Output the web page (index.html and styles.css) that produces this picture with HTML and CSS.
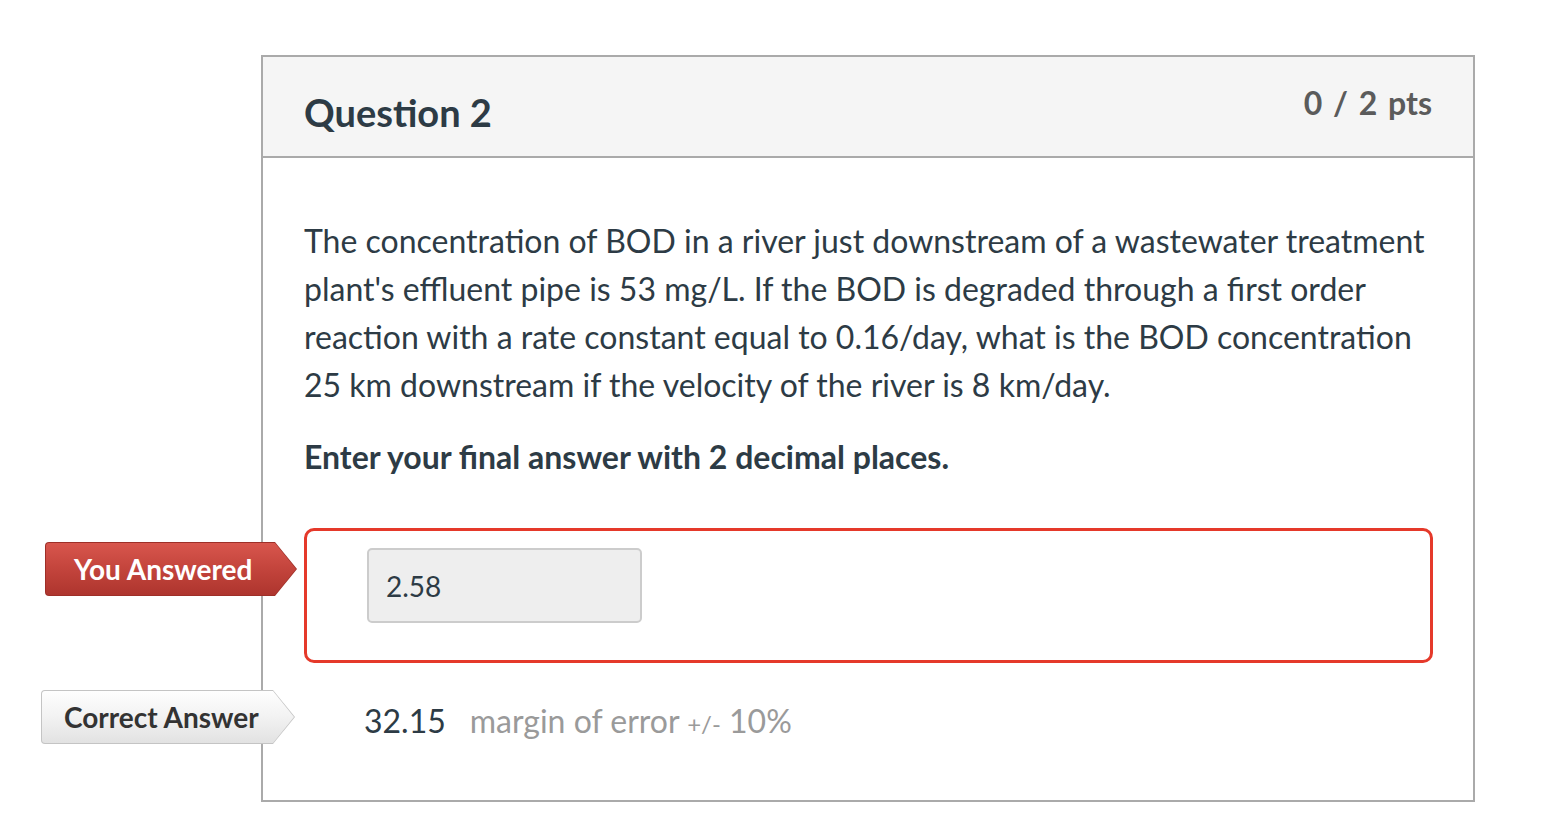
FILE: index.html
```html
<!DOCTYPE html>
<html lang="en">
<head>
<meta charset="utf-8">
<title>Question 2</title>
<link rel="stylesheet" href="styles.css">
</head>
<body>
<div class="page">
  <div class="card">
    <div class="card-header">
      <h2 class="question-name">Question 2</h2>
      <div class="points">0 / 2 pts</div>
    </div>
    <div class="card-body">
      <p class="question-text">The concentration of BOD in a river just downstream of a wastewater treatment plant's effluent pipe is 53 mg/L. If the BOD is degraded through a first order reaction with a rate constant equal to 0.16/day, what is the BOD concentration 25 km downstream if the velocity of the river is 8 km/day.</p>
      <p class="question-note">Enter your final answer with 2 decimal places.</p>

      <div class="answer-row">
        <div class="badge badge-wrong"><span class="badge-inner">You Answered</span></div>
        <div class="answer-box">
          <div class="answer-input">2.58</div>
        </div>
      </div>

      <div class="correct-row">
        <div class="badge badge-correct"><span class="badge-inner">Correct Answer</span></div>
        <span class="answer-number">32.15</span>
        <span class="margin">margin of error <span class="pm">+/-</span> 10%</span>
      </div>
    </div>
  </div>
</div>
</body>
</html>
```

FILE: styles.css
```css
* {
  box-sizing: border-box;
}

body {
  margin: 0;
  background: #ffffff;
  font-family: Lato, "Open Sans", "Liberation Sans", sans-serif;
  color: #2d3b45;
}

.page {
  padding: 55px 0 0 261px;
}

.card {
  width: 1214px;
  border: 2px solid #aaaaaa;
  background: #ffffff;
}

.card-header {
  display: flex;
  justify-content: space-between;
  align-items: flex-start;
  height: 101px;
  padding: 0 41px;
  background: #f5f5f5;
  border-bottom: 2px solid #aaaaaa;
}

.question-name {
  margin: 32px 0 0;
  font-size: 38px;
  line-height: 46px;
  font-weight: 700;
  color: #2d3b45;
}

.points {
  margin-top: 26px;
  font-size: 32px;
  line-height: 40px;
  font-weight: 700;
  word-spacing: 3px;
  color: #5b5b5b;
}

.card-body {
  padding: 59px 41px 48px 41px;
}

.question-text,
.question-note {
  margin: 0;
  font-size: 32px;
  line-height: 48px;
}

.question-note {
  margin-top: 24px;
  font-weight: 700;
}

.answer-row {
  position: relative;
  margin-top: 47px;
}

.answer-box {
  width: 1129px;
  height: 135px;
  border: 3px solid #e5392a;
  border-radius: 10px;
  padding: 17px 0 0 60px;
}

.answer-input {
  width: 275px;
  height: 75px;
  background: #eeeeee;
  border: 2px solid #cccccc;
  border-radius: 5px;
  padding-left: 17px;
  font-size: 28px;
  line-height: 73px;
  color: #2d3b45;
}

.correct-row {
  position: relative;
  display: flex;
  align-items: center;
  height: 60px;
  margin-top: 27px;
  padding-left: 60px;
  font-size: 32px;
}

.answer-number {
  color: #2d3b45;
}

.margin {
  margin-left: 24px;
  color: #9a9a9a;
}

.pm {
  font-size: 24px;
}

/* Arrow badges overlapping the card edge */
.badge {
  position: absolute;
  height: 54px;
  padding: 1px;
  border-radius: 4px 0 0 4px;
  clip-path: polygon(0 0, calc(100% - 22px) 0, 100% 50%, calc(100% - 22px) 100%, 0 100%);
}

.badge-inner {
  display: block;
  height: 100%;
  border-radius: 3px 0 0 3px;
  font-size: 28px;
  font-weight: 700;
  line-height: 52px;
  white-space: nowrap;
  clip-path: polygon(0 0, calc(100% - 21px) 0, 100% 50%, calc(100% - 21px) 100%, 0 100%);
}

.badge-wrong {
  top: 14px;
  left: -259px;
  width: 252px;
  background: #9e2f28;
}

.badge-wrong .badge-inner {
  padding-left: 28px;
  color: #ffffff;
  background: linear-gradient(to bottom, #d8564d 0%, #c3443c 50%, #ae352e 100%);
}

.badge-correct {
  top: 0;
  left: -263px;
  width: 254px;
  background: #c4c4c4;
}

.badge-correct .badge-inner {
  padding-left: 22px;
  color: #333333;
  background: linear-gradient(to bottom, #fefefe 0%, #f2f2f2 50%, #e2e2e2 100%);
}

.card-body::after {
  content: "";
  display: block;
  height: 2px;
}
```
